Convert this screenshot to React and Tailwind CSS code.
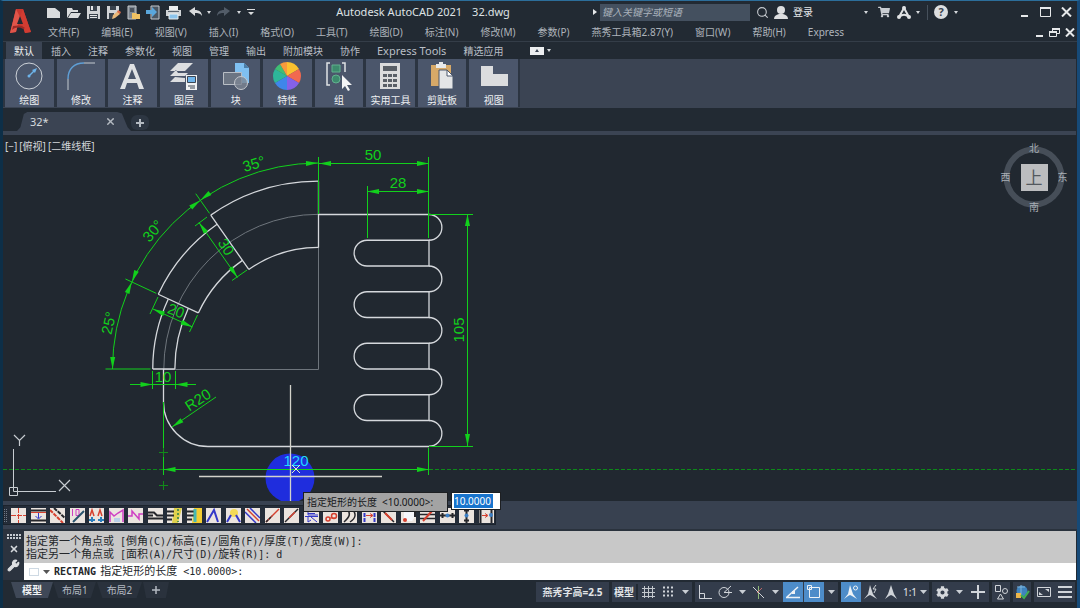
import { useState } from 'react'
import { Search, Wrench, X } from 'lucide-react'
import { FaCog, FaShoppingCart } from 'react-icons/fa'

const MENUS = ['文件(F)', '编辑(E)', '视图(V)', '插入(I)', '格式(O)', '工具(T)', '绘图(D)', '标注(N)', '修改(M)', '参数(P)', '燕秀工具箱2.87(Y)', '窗口(W)', '帮助(H)', 'Express']
const RIBBON_TABS = ['默认', '插入', '注释', '参数化', '视图', '管理', '输出', '附加模块', '协作', 'Express Tools', '精选应用']

const GREEN = '#12d01c'
const WHITE = '#d5d8dc'

/* ---------- small shared pieces ---------- */

function Caret({ className = 'w-[14px]' }) {
    return (
        <button aria-label="展开" className={`flex h-full items-center justify-center ${className}`}>
            <svg width="7" height="4" viewBox="0 0 7 4"><path d="M0 0h7L3.5 4z" fill="#c9ced4" /></svg>
        </button>
    )
}

function TinyCaret({ className = 'w-4' }) {
    return (
        <button aria-label="展开" className={`flex shrink-0 items-center justify-center ${className}`}>
            <svg width="4" height="3" viewBox="0 0 4 3"><path d="M0 0h4L2 3z" fill="#d5d8dc" /></svg>
        </button>
    )
}

// CJK glyphs are set one size larger than the monospaced latin ones
function ConsoleText({ children }) {
    return children.split(/([\x20-\x7e]+)/).map((part, i) =>
        i % 2 ? <span key={i} className="text-[10px]">{part}</span> : part
    )
}

/* ---------- title bar ---------- */

const QUICK_ACTIONS = [
    { label: '新建', icon: <path d="M1 3h8l5 4v6H1z" fill="#d9dbdd" /> },
    { label: '打开', icon: <><path d="M1 13V3h5l1 2h5v2H5z" fill="#d9dbdd" /><path d="M5 8h10l-3 5H2z" fill="#d9dbdd" /></> },
    { label: '保存', icon: <><path d="M1 1h13v13H1z" fill="#d0d3d6" /><path d="M4 1h7v5H4zM3 9h9v5H3z" fill="#39424d" /><path d="M5 1h2v4H5zM4 10h7v1H4zM4 12h7v1H4z" fill="#e4e6e8" /></> },
    { label: '另存为', icon: <><path d="M1 1h12v6l-6 7H1z" fill="#d0d3d6" /><path d="M4 1h6v4H4zM3 8h5v6H3z" fill="#39424d" /><path d="m6 14 1-4 5-4 2 3-5 4z" fill="#e9b878" /><path d="m11 7 1-2 3 2-1 2z" fill="#d66b4b" /></> },
    { label: '从移动设备打开', icon: <><path d="M2 1h8v13H2z" fill="#7d8690" stroke="#c5c9cd" /><path d="M6 8h4l1 1h3v5H6z" fill="#f0c263" /><path d="M4 3h4v4H4z" fill="#4a535e" /></> },
    { label: '保存到移动设备', icon: <><path d="M5 1h8v13H5z" fill="#4b5763" stroke="#c5c9cd" /><path d="M0 5h6V2l5 5-5 5V9H0z" fill="#5aa7dc" /></> },
    { label: '打印', icon: <><path d="M3 1h9v4H3z" fill="#eceeef" /><path d="M0 5h15v6H0z" fill="#cfd3d6" /><path d="M3 9h9v5H3z" fill="#8cc4ec" stroke="#eceeef" /><path d="M2 6h11v1H2z" fill="#5a636e" /></> },
]

function QuickAccess() {
    return (
        <div className="flex items-center">
            {QUICK_ACTIONS.map(({ label, icon }) => (
                <button key={label} aria-label={label} className="flex w-5 justify-center">
                    <svg width="15" height="15" viewBox="0 0 15 15">{icon}</svg>
                </button>
            ))}
            <button aria-label="放弃" className="ml-[2px] flex w-5 justify-center">
                <svg width="15" height="12" viewBox="0 0 15 12"><path d="m1 5 6-4v3c4 0 7 2 7 6-2-3-4-3-7-3v3z" fill="#d9dbdd" /></svg>
            </button>
            <TinyCaret className="w-2" />
            <button aria-label="重做" className="flex w-5 justify-center">
                <svg width="15" height="12" viewBox="0 0 15 12"><path d="M14 5 8 1v3C4 4 1 6 1 10c2-3 4-3 7-3v3z" fill="#525c68" /></svg>
            </button>
            <TinyCaret className="w-3" />
            <button aria-label="自定义快速访问工具栏" className="flex w-3 justify-center">
                <svg width="8" height="7" viewBox="0 0 8 7"><path d="M0 0h8v1H0zM1 3h6L4 6z" fill="#d9dbdd" /></svg>
            </button>
        </div>
    )
}

function Logo() {
    return (
        <button aria-label="应用程序菜单" className="flex w-10 shrink-0 items-center pl-[6px]">
            <svg width="23" height="26" viewBox="0 0 23 26">
                <path d="M7 1h7l8 23-6 1-2-6H8l-1 5-6 1z" fill="#c8372f" />
                <path d="m7 1-6 24 6-1 4-15z" fill="#e0554a" />
                <path d="M14 1 11 9l5 16 6-1z" fill="#d23c32" />
                <path d="m11 8 3 8H8z" fill="#222a33" />
                <path d="M4 18c5-1 9-1 12 2l-2 1c-4-2-7-2-11 1z" fill="#9c2a26" />
            </svg>
        </button>
    )
}

function WindowButtons() {
    return (
        <div className="ml-auto flex items-center">
            <button aria-label="最小化" className="flex w-[21px] justify-center"><svg width="9" height="10"><path d="M1 8h7v2H1z" fill="#e6e8ea" /></svg></button>
            <button aria-label="最大化" className="flex w-[21px] justify-center"><svg width="11" height="10"><path d="M.5 1h10v8.5H.5z" fill="none" stroke="#e6e8ea" /><path d="M0 0h11v2H0z" fill="#e6e8ea" /></svg></button>
            <button aria-label="关闭" className="flex w-[21px] justify-center"><svg width="11" height="10"><path d="m1 .5 9 9m0-9-9 9" stroke="#e6e8ea" strokeWidth="2" /></svg></button>
        </div>
    )
}

function TitleBar() {
    return (
        <div className="flex h-[22px] items-center">
            <QuickAccess />
            <h1 className="flex flex-1 justify-center gap-[10px] text-[11px] whitespace-nowrap text-[#dfe2e5]">
                <span>Autodesk AutoCAD 2021</span>
                <span>32.dwg</span>
            </h1>
            <div className="flex w-[488px] items-center">
                <button aria-label="折叠搜索" className="flex w-[11px] justify-center"><svg width="4" height="6"><path d="M0 0v6l4-3z" fill="#e6e8ea" /></svg></button>
                <input aria-label="搜索" placeholder="键入关键字或短语" className="h-[17px] w-[150px] bg-[#44505f] px-[2px] text-[10px] italic outline-none placeholder:text-[#aab2bb]" />
                <button aria-label="搜索" className="flex w-[24px] justify-center"><Search size={13} color="#c9cdd2" /></button>
                <button className="flex items-center gap-[5px] text-[10px] text-[#e6e8ea]">
                    <svg width="14" height="13" viewBox="0 0 14 13"><circle cx="7" cy="4" r="4" fill="#dcdee0" /><path d="M0 13c0-3 2-4 5-5h4c3 1 5 2 5 5z" fill="#dcdee0" /></svg>
                    登录
                </button>
                <TinyCaret className="ml-[47px] w-3" />
                <button aria-label="Autodesk App Store" className="ml-1 flex w-4 justify-center"><FaShoppingCart size={12} color="#c9cdd2" /></button>
                <button aria-label="Autodesk" className="ml-1 flex w-4 justify-center">
                    <svg width="14" height="13" viewBox="0 0 14 13"><path d="m7 2-5 9c4-3 6-3 10 0z" fill="none" stroke="#e0e2e4" strokeWidth="2" /><circle cx="7" cy="2" r="2" fill="#e0e2e4" /><circle cx="2" cy="11" r="2" fill="#e0e2e4" /><circle cx="12" cy="11" r="2" fill="#e0e2e4" /></svg>
                </button>
                <TinyCaret className="w-3" />
                <span className="mr-1 ml-[3px] h-[15px] w-px bg-[#46505b]" />
                <button aria-label="帮助" className="ml-[2px] flex size-[14px] items-center justify-center rounded-full bg-[#dcdee0] text-[11px] font-bold text-[#3a434e]">?</button>
                <TinyCaret className="ml-1 w-2" />
                <WindowButtons />
            </div>
        </div>
    )
}

function MenuBar() {
    return (
        <nav className="flex h-[18px] items-center gap-[22px] pl-[5px] text-[10px] whitespace-nowrap text-[#aeb4bb]">
            {MENUS.map((menu) => <button key={menu}>{menu}</button>)}
            <div className="ml-auto flex items-center">
                <button aria-label="最小化文档" className="flex w-[14px] justify-center"><svg width="8" height="10"><path d="M0 8h7v2H0z" fill="#e6e8ea" /></svg></button>
                <button aria-label="还原文档" className="flex w-[15px] justify-center"><svg width="11" height="9"><path d="M3.5 3V.5h7v5H8M.5 3.5h7v5h-7z" fill="none" stroke="#e6e8ea" /><path d="M3 0h8v2H3zM0 3h8v2H0z" fill="#e6e8ea" /></svg></button>
                <button aria-label="关闭文档" className="flex w-[15px] justify-center"><svg width="10" height="9"><path d="m1 .5 8 8m0-8-8 8" stroke="#e6e8ea" strokeWidth="2" /></svg></button>
            </div>
        </nav>
    )
}

/* ---------- ribbon ---------- */

const PANELS = [
    { label: '绘图', icon: <><circle cx="15" cy="15" r="13" fill="none" stroke="#ccd1d7" /><path d="m15 15 6-6" stroke="#6db3ea" strokeWidth="1.5" /><path d="m23 7-5 2 3 3z" fill="#6db3ea" /><circle cx="15" cy="15" r="1.5" fill="#6db3ea" /></> },
    { label: '修改', icon: <><path d="M2 29V18M18 2h11" stroke="#c4cad1" /><path d="M2 18C2 8 8 2 18 2" fill="none" stroke="#5f9fd6" strokeWidth="1.5" /></> },
    { label: '注释', icon: <path d="M3 28 13 3h4l10 25h-5l-2-6H10l-2 6zm8-10h8l-4-10z" fill="#e0e2e4" fillRule="evenodd" /> },
    { label: '图层', icon: <><path d="M9 2h15l-8 8H1zM7 9 1 15h15l3-3H9zM6 16l-5 5h15v-4z" fill="#dcdee0" /><path d="M17 14h11v15H17z" fill="#f0f1f2" /><path d="M18.500 15.500h8v6h-8z" fill="#6fb4ea" stroke="#3c4654" /><path d="M19 25h7m-5 2h5" stroke="#3c4654" /></> },
    { label: '块', icon: <><path d="M14 2h9l5 5v15H14z" fill="#7fc0f1" /><path d="m23 2 5 5h-5z" fill="#4c7ea8" /><path d="M2.500 11.500h18v12h-18z" fill="#6c7583" stroke="#b9bec5" /><circle cx="20" cy="22" r="6.500" fill="#7c8592" fillOpacity=".8" stroke="#c4c8cd" /></> },
    { label: '特性', icon: <><path d="M15 15V1a14 14 0 0 1 12 7z" fill="#fbc12f" /><path d="m15 15 12-7a14 14 0 0 1 0 14z" fill="#f2694f" /><path d="m15 15 12 7a14 14 0 0 1-12 7z" fill="#8561e8" /><path d="M15 15v14a14 14 0 0 1-12-7z" fill="#3f86ea" /><path d="M15 15 3 22A14 14 0 0 1 3 8z" fill="#2db69a" /><path d="M15 15 3 8a14 14 0 0 1 5-5z" fill="#3fbf74" /><path d="M15 15 8 3q3-2 7-2z" fill="#f79a3c" /></> },
    { label: '组', icon: <><path d="M6 2H3v22h3M18 2h3v9" fill="none" stroke="#dfe2e5" strokeWidth="1.5" /><path d="M8 4h8v7H8z" fill="#3d8b6d" stroke="#62b18f" /><circle cx="12" cy="18" r="4" fill="#3d8b6d" stroke="#62b18f" /><path d="m18 14 10 10h-5l3 5-2 1-3-5-3 3z" fill="#f4f5f6" /></> },
    { label: '实用工具', icon: <><path d="M5 2h20v26H5z" fill="#dcdcdc" /><path d="M8 5h14v5H8z" fill="#5a5f66" /><path d="M8 13h4v3H8zm5 0h4v3h-4zm5 0h4v3h-4zM8 18h4v3H8zm5 0h4v3h-4zm5 0h4v3h-4zM8 23h4v3H8zm5 0h4v3h-4zm5 0h4v3h-4z" fill="#5a5f66" /></> },
    { label: '剪贴板', icon: <><path d="M4 4h20v21H4z" fill="#d7a968" /><path d="M9 3h3V1h4v2h3v4H9z" fill="#e8e9ea" /><path d="M12 9h8l6 6v13H12z" fill="#e4e5e6" stroke="#4b566b" /><path d="M20 9v6h6z" fill="#fff" stroke="#4b566b" /></> },
    { label: '视图', icon: <path d="M2 5h12v8h15v12H2z" fill="#dcdddf" /> },
]

function Ribbon() {
    const [active, setActive] = useState('默认')
    return (
        <>
            <div className="flex h-[17px] items-center gap-px pl-[3px] text-[10px] whitespace-nowrap text-[#b9bfc6]">
                {RIBBON_TABS.map((tab) => (
                    <button
                        key={tab}
                        onClick={() => setActive(tab)}
                        className={`flex h-full items-center px-2 ${tab === active ? 'bg-[#3b4453] text-[#f0f2f4]' : ''} ${tab === 'Express Tools' ? 'text-[11px]' : ''}`}
                    >
                        {tab}
                    </button>
                ))}
                <button aria-label="最小化功能区" className="ml-[18px] flex h-2 w-[14px] items-center justify-center bg-[#eceef0]">
                    <svg width="4" height="3"><path d="M0 3h4L2 0z" fill="#3b4453" /></svg>
                </button>
                <TinyCaret className="w-2" />
            </div>
            <div className="mr-px bg-[#3b4453] pb-px">
                <div className="grid w-[517px] grid-cols-10 gap-[3px] bg-[#2c3542] px-[2px]">
                    {PANELS.map(({ label, icon }) => (
                        <button key={label} className="flex h-12 flex-col items-center gap-px bg-[#4b566b] pt-[2px] text-[10px] leading-4 whitespace-nowrap text-[#eef0f2]">
                            <svg width="30" height="30" viewBox="0 0 30 30" className="shrink-0">{icon}</svg>
                            {label}
                        </button>
                    ))}
                </div>
            </div>
        </>
    )
}

function FileTabs() {
    return (
        <div className="mr-px flex h-[27px] items-end border-b-4 border-[#3b4453] pl-[14px]">
            <div className="flex h-[19px] w-[114px] items-center justify-between bg-[#3b4453] pr-[15px] pl-[13px] text-[11px] text-[#d5d9dd] [clip-path:polygon(0_100%,3%_80%,6%_10%,9%_0,88%_0,92%_8%,97%_80%,100%_100%)]">
                <span>32*</span>
                <button aria-label="关闭 32*"><X size={11} strokeWidth={3} color="#b4bac1" /></button>
            </div>
            <button aria-label="新图形" className="mb-px flex h-[15px] w-[18px] items-center justify-center rounded-md bg-[#2d3642]">
                <svg width="8" height="8"><path d="M4 0v8M0 4h8" stroke="#b4bac1" strokeWidth="2" /></svg>
            </button>
        </div>
    )
}

/* ---------- drawing ---------- */

const CX = 318.5
const CY = 369
const UNIT = 2.21

// point at `deg` above the left horizontal, `r` pixels from the arc centre
const at = (deg, r) => {
    const a = (deg * Math.PI) / 180
    return [CX - r * Math.cos(a), CY - r * Math.sin(a)]
}
const arc = (from, to, r) => `M${at(from, r)}A${r} ${r} 0 0 1 ${at(to, r)}`
const ray = (deg, r1, r2) => `M${at(deg, r1)}L${at(deg, r2)}`
const tooth = (k) => 214.5 + k * 25.75

function Arrow({ x, y, deg }) {
    return <path d="M0 0-12-2.500V2.500z" fill={GREEN} stroke="none" transform={`translate(${x} ${y}) rotate(${deg})`} />
}

function DimText({ x, y, deg = 0, fill = GREEN, children }) {
    return (
        <text transform={`translate(${x} ${y}) rotate(${deg})`} y="5" textAnchor="middle" fontFamily="Liberation Sans, Arial, sans-serif" fontSize="15" fill={fill} stroke="none">
            {children}
        </text>
    )
}

function Geometry() {
    const bands = [[0, 25, 65, 75], [25, 55, 60, 80], [55, 90, 55, 85]]
    return (
        <g fill="none" stroke={WHITE} strokeWidth="1.300">
            <g stroke="#6e757c" strokeWidth="1">
                <path d={arc(0, 90, 70 * UNIT)} />
                <path d="M318.500 247V369.500H164" />
            </g>
            {bands.map(([from, to, inner, outer]) => (
                <path key={from} d={arc(from, to, inner * UNIT) + arc(from, to, outer * UNIT)} />
            ))}
            <path d={ray(0, 65 * UNIT, 75 * UNIT) + ray(25, 60 * UNIT, 80 * UNIT) + ray(55, 55 * UNIT, 85 * UNIT) + ray(90, 55 * UNIT, 85 * UNIT)} />
            <path d="M318.500 214.500H429M163.500 369V402A44.500 44.500 0 0 0 208 446.500H429" />
            {[0, 2, 4, 6, 8].map((k) => (
                <path key={k} d={`M429 ${tooth(k)}a12.875 12.875 0 0 1 0 25.75`} />
            ))}
            {[1, 3, 5, 7].map((k) => (
                <path key={k} d={`M429 ${tooth(k)}H367a12.875 12.875 0 0 0 0 25.75H429z`} />
            ))}
        </g>
    )
}

function Dimensions() {
    return (
        <g fill="none" stroke={GREEN}>
            <path d={arc(0, 90, 206)} />
            <path d={ray(0, 168, 213) + ray(25, 179, 213) + ray(55, 190, 214)} />
            <path d="M318.500 157V214M318.500 163.500H429M428.500 157V238M367 191.500H429M367.500 186V238" />
            <path d="M429 214.500H473M429 446.500H473M467.500 214V446" />
            <path d="M163.500 402V475M428.500 448V475M163 469.500H429" />
            <path d="M130 384.500H196M152.500 371V389M175.500 371V389" />
            <path d="M153 309 192.500 327M158 297 150 314M197.500 315 189.500 332" />
            <path d="M199 222.500 237.500 277.500M207 217 195 226M247 270 232 280.500" />
            <path d="M172 427 216 397" />
            <path d="M159 452.500h9m-4.500-4.500v9M159 485.500h9m-4.500-4.500v9" stroke="#128a1a" />

            <Arrow x={318} y={163} deg={-2} />
            <Arrow x={at(55, 206)[0]} y={at(55, 206)[1]} deg={143} />
            <Arrow x={at(55, 206)[0]} y={at(55, 206)[1]} deg={-37} />
            <Arrow x={at(25, 206)[0]} y={at(25, 206)[1]} deg={113} />
            <Arrow x={at(25, 206)[0]} y={at(25, 206)[1]} deg={-67} />
            <Arrow x={112.5} y={369} deg={91} />
            <Arrow x={319} y={163.5} deg={180} />
            <Arrow x={429} y={163.5} deg={0} />
            <Arrow x={367} y={191.5} deg={180} />
            <Arrow x={429} y={191.5} deg={0} />
            <Arrow x={467.5} y={214} deg={-90} />
            <Arrow x={467.5} y={446} deg={90} />
            <Arrow x={163.5} y={469.5} deg={180} />
            <Arrow x={429} y={469.5} deg={0} />
            <Arrow x={152.5} y={384.5} deg={0} />
            <Arrow x={175.5} y={384.5} deg={180} />
            <Arrow x={153} y={309} deg={204} />
            <Arrow x={192.5} y={327} deg={24} />
            <Arrow x={199} y={222.5} deg={235} />
            <Arrow x={237.5} y={277.5} deg={55} />
            <Arrow x={172} y={427} deg={146} />

            <DimText x={373} y={155}>50</DimText>
            <DimText x={398} y={183}>28</DimText>
            <DimText x={459} y={330} deg={-90}>105</DimText>
            <DimText x={254} y={164} deg={-17}>35°</DimText>
            <DimText x={153} y={231} deg={-50}>30°</DimText>
            <DimText x={109} y={323} deg={-77}>25°</DimText>
            <DimText x={226} y={247} deg={57}>30</DimText>
            <DimText x={176} y={311} deg={20}>20</DimText>
            <DimText x={163} y={377}>10</DimText>
            <DimText x={198} y={400} deg={-33}>R20</DimText>
        </g>
    )
}

function Drawing() {
    return (
        <svg className="block h-full w-full" role="img" aria-label="图纸 32.dwg">
            <g transform="translate(-3 -135)">
                <circle cx="290" cy="478" r="24.500" fill="#1f2ddd" />
                <path d="M3 469.500H2000" stroke="#0d8a19" strokeDasharray="4 2" />
                <Geometry />
                <Dimensions />
                <DimText x={296} y={461} fill="#22d6ff">120</DimText>
                <path d="M290.500 385V502M199 476.500H382" stroke="#d3d3cb" strokeWidth="1.300" />
                <path d="m292 465 8 8m0-8-8 8" stroke="#e4f0c8" />
                <g stroke="#c7ccd1" fill="none">
                    <path d="M13.500 449V491.500H56M9.500 487.500h8v8h-8z" />
                    <path d="m14 435 5.500 5.500 5.500-5.500M19.500 440.500V446M59 480l11 11m0-11-11 11" strokeWidth="1.200" />
                </g>
            </g>
        </svg>
    )
}

function ViewCube() {
    return (
        <div className="absolute top-[7px] right-2 grid size-[70px] grid-cols-[1fr_28px_1fr] grid-rows-[1fr_28px_1fr] place-items-center text-[10px] leading-none text-[#a9afb5]">
            <svg className="absolute" width="62" height="62"><circle cx="31" cy="31" r="27.500" fill="none" stroke="#464e58" strokeWidth="6" /></svg>
            <button className="relative col-start-2 row-start-1 mb-[10px]">北</button>
            <button className="relative col-start-1 row-start-2 mr-[8px]">西</button>
            <button className="relative col-start-2 row-start-2 flex size-[27px] items-center justify-center bg-[#bcbdbf] text-[17px] text-[#53585e]">上</button>
            <button className="relative col-start-3 row-start-2 ml-[8px]">东</button>
            <button className="relative col-start-2 row-start-3 mt-[10px]">南</button>
        </div>
    )
}

function DynamicInput() {
    const [length, setLength] = useState('10.0000')
    return (
        <div className="absolute top-[357px] left-[300px] z-10 flex items-start gap-[3px] text-[10px]">
            <label htmlFor="rect-length" className="flex h-5 w-[145px] items-center gap-[5px] border border-[#1d1f22] bg-[#a3a3a3] px-[3px] whitespace-nowrap text-[#15171a]">
                <span>指定矩形的长度</span>
                <span>&lt;10.0000&gt;:</span>
            </label>
            <span className="flex h-[18px] w-[50px] items-center border border-[#1d1f22] bg-white px-[2px]">
                <input
                    id="rect-length"
                    value={length}
                    onChange={(e) => setLength(e.target.value)}
                    className="h-[14px] w-[39px] bg-[#1874cd] text-[10px] text-white outline-none"
                />
            </span>
        </div>
    )
}

function Viewport() {
    return (
        <main className="relative min-h-0 flex-1 bg-[#212830]">
            <div className="absolute inset-0 overflow-hidden"><Drawing /></div>
            <div className="absolute top-[3px] left-[2px] flex gap-[2px] text-[10px] leading-4 text-[#d5d8dc]">
                <button>[−]</button><button>[俯视]</button><button>[二维线框]</button>
            </div>
            <ViewCube />
            <DynamicInput />
        </main>
    )
}

/* ---------- tool strip ---------- */

const R = '#d6402f'
const K = '#26262b'
const B = '#3338c8'
const M = '#cf3fc4'

const TOOLS = [
    ['中心线', <path d="M7.500 0v15M0 7.500h15" stroke={R} strokeDasharray="5 1" />],
    ['标高', <><path d="M0 2.500h15M0 12.500h15" stroke={K} strokeWidth="2" /><path d="M0 4.500h15" stroke={R} /><path d="M7.500 5v5m-3-2 3 3 3-3" stroke={B} fill="none" /></>],
    ['平行线', <><path d="m4 0 11 10" stroke={K} strokeWidth="2" strokeDasharray="4 1" /><path d="m0 2 13 13" stroke={R} strokeWidth="2" strokeDasharray="4 1" /></>],
    ['标注十', <><path d="M2.500 1v7M6 1.500h3v6H6z" stroke={M} fill="none" /><path d="M3 14 14 3" stroke="#28536e" strokeWidth="2" /></>],
    ['字距', <><path d="m1 8 2-6 2 6M9 8l2-6 2 6" stroke={R} strokeWidth="1.500" fill="none" /><path d="M0 12h6m3 0h6M3 9v5m9-5v5" stroke="#2c7dbb" strokeWidth="2" /></>],
    ['曲线', <><path d="M1 14V4l4 4 4-3 5-3v12" stroke={M} strokeWidth="1.500" fill="none" /><path d="M5 10h6v4H5z" fill="#b9cfe8" /></>],
    ['折线', <path d="M0 8h4V3l7 8V6h4" stroke={M} strokeWidth="1.500" fill="none" />],
    ['打断', <path d="M0 4.500h6l3 3h6M0 10.500h15M0 7.500h5" stroke={K} strokeWidth="2" fill="none" />],
    ['图案甲', <><path d="M7 0h8l-4 15H5z" fill="#dfd04c" /><path d="M0 3.500h7M0 7.500h7M0 11.500h5" stroke={K} strokeWidth="2" /><path d="M11 1v13" stroke="#57924b" strokeDasharray="2 2" strokeWidth="2" /></>],
    ['图案乙', <><path d="M7 0h8v15H5z" fill="#f3cd33" /><path d="M0 3.500h7M0 7.500h7M0 11.500h5" stroke={K} strokeWidth="2" /><path d="M8 1v13" stroke="#45b8b5" strokeWidth="3" /></>],
    ['折角', <path d="m1 14 7-12 4 12" stroke={B} strokeWidth="2" fill="none" />],
    ['亮点', <><circle cx="8" cy="5" r="4" fill="#f3da58" /><path d="m1 14 4-7m5 0 4 7" stroke={B} strokeWidth="2" /></>],
    ['三线', <><path d="m0 4 11 11M5 0l10 10" stroke={B} strokeWidth="1.500" /><path d="m2 1 12 12" stroke={R} strokeWidth="1.500" /></>],
    ['斜线', <><path d="M1 14 14 1" stroke={R} strokeWidth="1.500" /><path d="m1 14 6-6" stroke={K} strokeWidth="1.500" strokeDasharray="3 1" /></>],
    ['直线', <><path d="M1 14 14 1" stroke={K} strokeWidth="1.500" /><path d="m5 10 6-6" stroke={R} strokeWidth="1.500" /></>],
    ['长度', <path d="M4 1h8M4 1v6h10M4 3.500h7M4 5.500h7M1 8.500h13M4 9v5l3-2M7 9l6 5" stroke={B} fill="none" />],
    ['圆链', <><circle cx="5" cy="11" r="2" stroke={R} strokeWidth="1.500" fill="none" /><circle cx="11" cy="8" r="2.500" stroke={R} strokeWidth="1.500" fill="none" /><path d="M7 10h5" stroke={R} /></>],
    ['弧', <path d="M5 2q6 4-3 12M10 1q7 7-2 13" stroke={K} strokeWidth="1.500" fill="none" />],
    ['移动', <><path d="M2.500 0v15M12.500 0v15" stroke={B} strokeWidth="2" strokeDasharray="4 1" /><path d="M4 7.500h6m-2-2 3 2-3 2" stroke={R} fill="none" /></>],
    ['斜向', <><path d="m1 2 12 12" stroke={K} strokeWidth="1.500" /><path d="m4 5 7 7" stroke={R} strokeWidth="2" /></>],
    ['倒角', <><path d="M3 1h11v8l-3 4H3z" fill="#f5f6fb" /><path d="M1 1h13v8" stroke={K} strokeWidth="2" fill="none" /><circle cx="4" cy="12" r="2" fill={R} /></>],
    ['交叉', <><path d="M0 6.500h15M0 10.500h15" stroke={K} strokeWidth="1.500" /><path d="m3 13 9-10" stroke={R} strokeWidth="2" /></>],
    ['水平', <><path d="M0 7.500h15M2.500 5v5M12.500 5v5" stroke={K} strokeWidth="2" /><circle cx="7.500" cy="7.500" r="2" fill="#3d7fc4" /></>],
    ['竖直', <><path d="M7.500 0v15M5 2.500h5M5 12.500h5" stroke={K} strokeWidth="2" /><circle cx="7.500" cy="7.500" r="2" fill="#3d7fc4" /></>],
    ['右移', <><path d="M1.500 0v15M12.500 0v15" stroke={K} strokeWidth="2" /><path d="M3 7.500h5m-2-2 3 2-3 2" stroke={R} fill="none" /><circle cx="12" cy="7" r="2" fill="#3d7fc4" /></>],
]

function ToolStrip() {
    return (
        <div className="bg-[#384150] pt-1 pb-1">
            <div className="flex h-5 w-[493px] items-center justify-between border border-[#1c232c] bg-[#252d39] pr-px">
                <svg width="3" height="13" aria-hidden="true"><path d="M0 .5h3M0 2.500h3M0 4.500h3M0 6.500h3M0 8.500h3M0 10.500h3M0 12.500h3" stroke="#717b88" strokeDasharray="1 1" /></svg>
                {TOOLS.map(([label, icon]) => (
                    <button key={label} aria-label={label} className="size-[15px] bg-[#ebe4df]">
                        <svg width="15" height="15" viewBox="0 0 15 15">{icon}</svg>
                    </button>
                ))}
            </div>
        </div>
    )
}

/* ---------- command line ---------- */

function CommandLine() {
    const [command, setCommand] = useState('')
    return (
        <section className="flex border-t-2 border-[#2a323d] font-['DejaVu_Sans_Mono','Noto_Sans_CJK_SC',monospace] text-[11px] whitespace-nowrap text-[#24272b]">
            <div className="flex w-[21px] shrink-0 flex-col items-center gap-[5px] bg-[#2b333f] pt-[3px]">
                <svg width="14" height="5" aria-hidden="true"><path d="M0 1h14M0 4h14" stroke="#c5cad0" strokeWidth="2" strokeDasharray="2 1" /></svg>
                <button aria-label="关闭命令行"><X size={10} strokeWidth={4} color="#d5d8dc" /></button>
                <button aria-label="自定义"><Wrench size={13} fill="#dfe1e4" color="#dfe1e4" /></button>
            </div>
            <div className="mr-px min-w-0 flex-1">
                <div className="bg-[#c8c8c8] px-[2px] pt-1 pb-[2px] leading-[13px]">
                    <p><ConsoleText>指定第一个角点或 [倒角(C)/标高(E)/圆角(F)/厚度(T)/宽度(W)]:</ConsoleText></p>
                    <p><ConsoleText>指定另一个角点或 [面积(A)/尺寸(D)/旋转(R)]: d</ConsoleText></p>
                </div>
                <div className="flex h-[17px] items-center bg-white pt-px pl-1">
                    <svg width="12" height="10" aria-hidden="true"><path d="M1.500 1.500h9v7h-9z" fill="none" stroke="#9db2c6" strokeDasharray="1 1" /></svg>
                    <button aria-label="最近使用的命令" className="flex w-[12px] justify-center"><svg width="7" height="4"><path d="M0 0h7L3.500 4z" fill="#555" /></svg></button>
                    <label htmlFor="command" className="ml-[2px]">
                        <b className="mr-1 text-[10px]">RECTANG</b>
                        <ConsoleText>指定矩形的长度 &lt;10.0000&gt;:</ConsoleText>
                    </label>
                    <input id="command" value={command} onChange={(e) => setCommand(e.target.value)} className="ml-1 h-full flex-1 outline-none" />
                </div>
            </div>
        </section>
    )
}

/* ---------- status bar ---------- */

function StatusIcon({ label, on, className = 'w-5', children }) {
    return (
        <button aria-label={label} className={`flex h-full items-center justify-center ${className} ${on ? 'bg-[#4d8cc9]' : ''}`}>
            <svg width="16" height="16" viewBox="0 0 16 16" fill="none" stroke="#d0d4d9">{children}</svg>
        </button>
    )
}

function StatusGroup({ children }) {
    return <div className="flex h-5 items-center bg-[#333c4b]">{children}</div>
}

function StatusBar() {
    const layoutTab = 'h-4 px-[9px] [clip-path:polygon(0_0,100%_0,88%_100%,12%_100%)]'
    return (
        <footer className="flex h-[28px] items-start justify-between pt-[2px] pr-[2px] text-[10px] whitespace-nowrap text-[#b4bac2]">
            <div className="flex items-center pl-2">
                <button className={`w-[42px] bg-[#3f4857] font-bold text-[#f0f2f4] ${layoutTab}`}>模型</button>
                <button className={`w-[43px] bg-[#2a323d] ${layoutTab}`}>布局1</button>
                <button className={`ml-px w-[45px] bg-[#2a323d] ${layoutTab}`}>布局2</button>
                <button aria-label="新建布局" className={`ml-px flex w-[26px] items-center justify-center bg-[#2a323d] ${layoutTab}`}>
                    <svg width="8" height="8" className="shrink-0"><path d="M4 0v8M0 4h8" stroke="#b4bac2" strokeWidth="1.500" /></svg>
                </button>
            </div>
            <div className="flex gap-[3px] text-[#e2e5e8]">
                <StatusGroup><button className="w-[73px] font-bold">燕秀字高=2.5</button></StatusGroup>
                <StatusGroup>
                    <button className="w-[26px] border-r-2 border-[#222a33] font-bold">模型</button>
                    <button aria-label="栅格" className="flex w-5 justify-center">
                        <svg width="14" height="14" viewBox="0 0 14 14"><path d="M3.500 1v12M7.500 1v12M11.500 1v12M1 3.500h13M1 7.500h13M1 11.500h13" stroke="#c3c8ce" /></svg>
                    </button>
                    <StatusIcon label="捕捉"><path d="M3 3.500h12M3 7.500h12M3 11.500h12" strokeWidth="2" strokeDasharray="2 2" /></StatusIcon>
                    <Caret />
                </StatusGroup>
                <StatusGroup>
                    <StatusIcon label="正交"><path d="M2.500 1v13.500H15M2.500 9.500h5v5" /></StatusIcon>
                    <StatusIcon label="极轴追踪"><circle cx="7" cy="8.500" r="5" /><path d="M7 8.500h8M7 8.500 14 2" /></StatusIcon>
                    <Caret />
                    <StatusIcon label="等轴测草图" className="w-[18px]"><path d="M8.500 2v13" stroke="#8fb877" /><path d="m3 3 11 11" /><path d="m12 4-5 5" stroke="#b66" /></StatusIcon>
                    <Caret className="w-4" />
                    <StatusIcon label="对象捕捉追踪" on><path d="M1 13.500h14M2 13 13 3" strokeWidth="1.500" stroke="#eef2f6" /><path d="M7 7h3v3H7z" fill="#eef2f6" stroke="none" /></StatusIcon>
                    <span className="w-px" />
                    <StatusIcon label="对象捕捉" on><path d="M3.500 3.500h10v10h-10zM1.500 1.500h4v4h-4z" stroke="#eef2f6" /></StatusIcon>
                    <Caret />
                </StatusGroup>
                <StatusGroup>
                    <StatusIcon label="注释可见性" on><path d="m7 1 3 9 4 5-5-3-2-1-2 1-4 3 4-5z" fill="#eef2f6" stroke="none" /><circle cx="12.500" cy="4" r="2" stroke="#eef2f6" /></StatusIcon>
                    <StatusIcon label="自动缩放"><path d="m7 1 3 9 4 5-5-3-2-1-2 1-4 3 4-5z" fill="#cfd3d8" stroke="none" /><path d="m13 1-3 4h3l-2 4" /></StatusIcon>
                    <StatusIcon label="注释比例"><path d="m8 1 3 9 3 5-4-3-2-1-2 1-4 3 3-5z" fill="#cfd3d8" stroke="none" /></StatusIcon>
                    <button className="flex w-[28px] items-center justify-center gap-[3px] text-[10px]">
                        1:1
                        <svg width="7" height="4" className="shrink-0"><path d="M0 0h7L3.500 4z" fill="#c9ced4" /></svg>
                    </button>
                </StatusGroup>
                <StatusGroup>
                    <button aria-label="切换工作空间" className="flex w-5 justify-center"><FaCog size={13} color="#d5d8dc" /></button>
                    <Caret className="w-[15px]" />
                    <StatusIcon label="注释监视器" className="w-[22px]"><path d="M8 1v14M1 8h14" strokeWidth="2" /></StatusIcon>
                </StatusGroup>
                <StatusGroup><StatusIcon label="隔离对象" className="w-[18px]"><path d="M2.500 1.500h5v6h-5z" /><circle cx="12" cy="7" r="2.500" /><path d="m7.500 10 3 5h-6z" /></StatusIcon></StatusGroup>
                <StatusGroup>
                    <StatusIcon label="硬件加速" className="w-[18px]">
                        <circle cx="8" cy="7" r="5.500" fill="#3f83bd" stroke="none" />
                        <path d="M3 3h8M7 1v10" stroke="#7fb5dd" />
                        <path d="M2 9h5v5H2z" fill="#ecb64a" stroke="none" />
                        <path d="m7 11 3 3 5-7" stroke="#3fae53" strokeWidth="2" />
                    </StatusIcon>
                </StatusGroup>
                <StatusGroup>
                    <StatusIcon label="全屏显示"><path d="M1.500 3.500h13v9h-13z" /><path d="M9 5h4v3zM7 11H3V8z" fill="#d0d4d9" stroke="none" /></StatusIcon>
                    <StatusIcon label="自定义" className="w-[21px]"><path d="M1 3h14M1 8h14M1 13h14" strokeWidth="2" /></StatusIcon>
                </StatusGroup>
            </div>
        </footer>
    )
}

export default function App() {
    return (
        <div className="flex h-screen flex-col overflow-hidden border-x-[3px] border-t border-t-[#2c6e9b] border-r-[#164a78] border-l-[#0d2f48] bg-[#222a33] font-['Noto_Sans','Noto_Sans_CJK_SC',sans-serif] leading-4">
            <header className="flex border-b border-[#343d48]">
                <Logo />
                <div className="min-w-0 flex-1">
                    <TitleBar />
                    <MenuBar />
                </div>
            </header>
            <Ribbon />
            <FileTabs />
            <Viewport />
            <ToolStrip />
            <CommandLine />
            <StatusBar />
        </div>
    )
}
